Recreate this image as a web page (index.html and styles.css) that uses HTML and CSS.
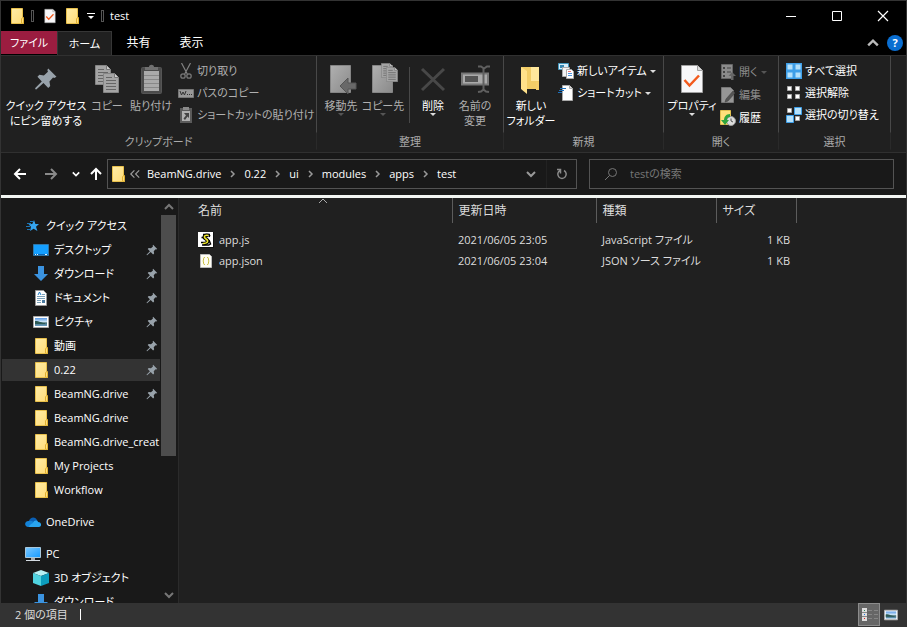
FILE: index.html
```html
<!DOCTYPE html>
<html lang="ja">
<head>
<meta charset="utf-8">
<title>test</title>
<link rel="stylesheet" href="styles.css">
</head>
<body>
<svg class="sprite" aria-hidden="true">
  <defs>
    <linearGradient id="g-folder" x1="0" y1="0" x2="1" y2="1"><stop offset="0" stop-color="#ffeca6"/><stop offset="1" stop-color="#ffdc78"/></linearGradient>
    <linearGradient id="g-gray" x1="0" y1="0" x2="1" y2="1"><stop offset="0" stop-color="#b0b0b0"/><stop offset="1" stop-color="#8a8a8a"/></linearGradient>
    <linearGradient id="g-screen" x1="0" y1="0" x2="1" y2="1"><stop offset="0" stop-color="#7cc8ff"/><stop offset="1" stop-color="#159aff"/></linearGradient>
    <linearGradient id="g-sky" x1="0" y1="0" x2="0" y2="1"><stop offset="0" stop-color="#5a9ae8"/><stop offset=".5" stop-color="#d8ecf8"/><stop offset=".6" stop-color="#406a70"/><stop offset="1" stop-color="#6aa0c8"/></linearGradient>
  </defs>
  <symbol id="folder" viewBox="0 0 16 16"><path d="M2.500 .5h11v10h1v5h-12z" fill="url(#g-folder)" stroke="#e8c04c"/><path d="M12.500 15V11l1-1.500h1v6z" fill="#ffdf80" stroke="#e0b030"/></symbol>
  <symbol id="doccheck" viewBox="0 0 24 32"><path d="M1.500 2.500h16l5 5v22h-21z" fill="#f7f7f9" stroke="#a0a0a0"/><path d="M17.500 2.500v5h5" fill="#ddd" stroke="#a0a0a0"/><path d="M4.500 17l5 5.500L19 12.500" fill="none" stroke="#f25a1d" stroke-width="2.500"/></symbol>
  <symbol id="pin" viewBox="0 0 16 16"><path d="M9.500 1l5.500 5.500-1.500.8-.8-.3-2.400 2.700.5 3-1.300 1.300L6.300 10.700 1.500 15l-.8-.3.3-.8 4.200-4.300L2.300 6.500 3.600 5.200l3 .4L9.300 3.200 8.900 2z" fill="#98a2aa"/></symbol>
  <symbol id="sheet" viewBox="0 0 16 20"><path d="M.5.500h11l4 4v15H.5z" fill="#a4a4a4" stroke="#858585"/><path d="M11.500.500v4h4" fill="#ccc" stroke="#777"/><path d="M3 4.500h6M3 7.500h10M3 10.500h10M3 13.500h10M3 16.500h10" stroke="#666"/></symbol>
  <symbol id="copy" viewBox="0 0 32 32"><use href="#sheet" x="4" y="2" width="16" height="20"/><use href="#sheet" x="12" y="10" width="16" height="20"/></symbol>
  <symbol id="paste" viewBox="0 0 32 32"><rect x="6.500" y="4.500" width="20" height="26" rx="1" fill="#4b4b4b" stroke="#555"/><path d="M9 8h15v20H9z" fill="#aaa"/><path d="M10 7V4h4c0-3 5-3 5 0h4v3z" fill="#707070"/><path d="M9 12.500h15M9 16.500h15M9 20.500h15M9 24.500h15" stroke="#888"/></symbol>
  <symbol id="cut" viewBox="0 0 16 16"><path d="M3.500 0l5.800 11M12.500 0L6.700 11" stroke="#828282" stroke-width="1.200"/><circle cx="5" cy="13" r="2.200" fill="none" stroke="#777" stroke-width="1.300"/><circle cx="11" cy="13" r="2.200" fill="none" stroke="#777" stroke-width="1.300"/></symbol>
  <symbol id="path" viewBox="0 0 16 16"><path d="M.5 4.500h15v8H.5z" fill="#999" stroke="#777"/><path d="M2 6l1.500 4L5 7l1.500 3L8 6" fill="none" stroke="#333"/><path d="M9 9.500h1M11 9.500h1M13 9.500h1" stroke="#333"/></symbol>
  <symbol id="pastelink" viewBox="0 0 16 16"><path d="M2 1h12v15H2z" fill="#5a5a5a"/><path d="M4 4h8v10H4z" fill="#b0b0b0"/><path d="M5 0h6v3H5z" fill="#8a8a8a"/><path d="M6 6h5v5L9.500 9.500 7 13 5.500 11.500l2.500-3z" fill="#444"/></symbol>
  <symbol id="move" viewBox="0 0 32 32"><path d="M5.500 2.500h20v27h-20z" fill="url(#g-gray)" stroke="#858585"/><path d="M15 23l8-8v5h8v6h-8v5z" fill="#686868" stroke="#555"/></symbol>
  <symbol id="copyto" viewBox="0 0 32 32"><path d="M5.500 2.500h20v27h-20z" fill="url(#g-gray)" stroke="#858585"/><use href="#sheet" x="14" y="0" width="12" height="15"/><use href="#sheet" x="19" y="4" width="12" height="15"/></symbol>
  <symbol id="delete" viewBox="0 0 32 32"><path d="M5 6l22 21M27 6L5 27" stroke="#484848" stroke-width="3"/></symbol>
  <symbol id="rename" viewBox="0 0 32 32"><path d="M3 10.500h26v11H3z" fill="#aaa" stroke="#777" stroke-width="2"/><path d="M6 13h13v6H6z" fill="#555"/><path d="M19 3.500h3l3 2 3-2h3M24.500 5v22M19 29l3-.5 2.500-2 2.500 2 3 .5" fill="none" stroke="#606060" stroke-width="2"/></symbol>
  <symbol id="newfolder" viewBox="0 0 32 32"><path d="M6 4h18v15h-1v7h-12z" fill="#f2cd67"/><path d="M16 4h8v14h-8z" fill="#ffe79c"/><path d="M6 4l6 4v23l-6-5z" fill="#ffe18a"/><path d="M21 19h3v8h-3z" fill="#f5cf6b"/></symbol>
  <symbol id="newitem" viewBox="0 0 16 16"><path d="M.5.500h10v6H.5z" fill="#d6edfa" stroke="#4397bd"/><path d="M2 2h4v3H2z" fill="#3786b0"/><path d="M4.500 4.500h7v9h-7z" fill="#f4f4f4" stroke="#aaa"/><path d="M8.500 6.500h5l2 2v7h-7z" fill="#fff" stroke="#aaa"/><path d="M10 10.500h4M10 12.500h4" stroke="#4e93df"/><path d="M10 8.500h3" stroke="#e77"/></symbol>
  <symbol id="shortcut" viewBox="0 0 16 16"><path d="M4.500.500h7l3 3v12h-10z" fill="#fff" stroke="#aaa"/><path d="M11.500.500v3h3" fill="#ddd" stroke="#aaa"/><path d="M2 3.500h6M1 5.500h5M0 7.500h4" stroke="#1e6fb8"/></symbol>
  <symbol id="open" viewBox="0 0 16 16"><path d="M1.500.500h11v14h-11z" fill="#8b8b8b" stroke="#666"/><path d="M3 3h2v2H3zM3 7h2v2H3zM3 11h2v2H3zM7 3.500h4v1H7zM7 7.500h4v1H7z" fill="#444"/><path d="M11 16v-4H8.500L12 8l4 4h-2.500v4z" fill="#666"/></symbol>
  <symbol id="edit" viewBox="0 0 16 16"><path d="M1.500.500h9l3 3v12h-12z" fill="#969696" stroke="#777"/><path d="M5 15l1-3 7-8 2 2-7 8z" fill="#555" stroke="#3c3c3c" stroke-width=".5"/></symbol>
  <symbol id="history" viewBox="0 0 16 16"><path d="M.5.500h10v14H.5z" fill="#ffe07a" stroke="#e0c050"/><circle cx="11" cy="11" r="4.500" fill="#ddd" stroke="#999"/><path d="M11 8.500V11l2 1" fill="none" stroke="#555"/><path d="M10 4C6 4 4 7 4 10H1l4 5 4-5H7c0-2 1-3 3-3z" fill="#2fa43c"/></symbol>
  <symbol id="selall" viewBox="0 0 16 16"><path d="M0 0h16v16H0z" fill="#3f9fe8"/><path d="M1.500 1.500h5v5h-5zM9.500 1.500h5v5h-5zM1.500 9.500h5v5h-5zM9.500 9.500h5v5h-5z" fill="#b5e1fb"/></symbol>
  <symbol id="selnone" viewBox="0 0 16 16"><path d="M1.500 1.500h4v4h-4zM9.500 1.500h4v4h-4zM1.500 9.500h4v4h-4zM9.500 9.500h4v4h-4z" fill="#fff" stroke="#a8a8a8"/></symbol>
  <symbol id="selinv" viewBox="0 0 16 16"><path d="M1.500 1.500h4v4h-4zM9.500 9.500h4v4h-4z" fill="#fff" stroke="#a8a8a8"/><path d="M8.500.500h7v7h-7zM.5 8.500h7v7h-7z" fill="#b5e1fb" stroke="#3f9fe8"/></symbol>
  <symbol id="star" viewBox="0 0 16 16"><path d="M9 2l1.400 4H14l-3 2.700 1.400 4.300L8.600 10.700 5 13l1-4.300L3.500 6.300l3.800-.3z" fill="#35a5f0"/><path d="M2 5.500h4M1 8.500h4M2 11.500h3M5 3.500h3" stroke="#1c75b5"/></symbol>
  <symbol id="desktop" viewBox="0 0 16 16"><path d="M.5 2.500h15v11H.5z" fill="#159fff" stroke="#3077a8"/><path d="M1 12.500h14" stroke="#0b66b5"/><path d="M2 12.500h1M4 12.500h1M12 12.500h2" stroke="#e8f6ff"/></symbol>
  <symbol id="download" viewBox="0 0 16 16"><path d="M5 0h6v8h4l-7 7-7-7h4z" fill="#3b93e0"/></symbol>
  <symbol id="document" viewBox="0 0 16 16"><path d="M2.500.500h8l3 3v12h-11z" fill="#fff" stroke="#999"/><path d="M4 6.500h8M4 12.500h4M4 10.500h4M4 8.500h8M9 4.500h3" stroke="#7aa0b8"/><path d="M5 5l1.500-3L8 5" fill="none" stroke="#2080c8"/><path d="M9 10h3v3H9z" fill="#4a7aa0"/></symbol>
  <symbol id="picture" viewBox="0 0 16 16"><path d="M.5 2.500h15v11H.5z" fill="#fff" stroke="#aaa"/><path d="M2 4h12v8H2z" fill="url(#g-sky)"/><path d="M2 7c5 0 6 2 10 2v1H2z" fill="#2c5a55"/></symbol>
  <symbol id="cloud" viewBox="0 0 16 16"><path d="M4 7c1-4 6-5 8-1l2 4-8 2z" fill="#0a5fb4"/><path d="M3.500 7c3-1 5 1 8 3v3h-8C-1 13-1 7 3.500 7z" fill="#1483d8"/><path d="M8 9c1-3 4-3 5-1 4 0 4 5 1 5H4c0-2 2-3 4-4z" fill="#29a5ef"/></symbol>
  <symbol id="pc" viewBox="0 0 16 16"><path d="M.5 1.500h15v10H.5z" fill="url(#g-screen)" stroke="#a8c8dc"/><path d="M6 12h4v2H6z" fill="#aaa"/><path d="M1 14.500h14" stroke="#d5dce2"/></symbol>
  <symbol id="cube" viewBox="0 0 16 16"><path d="M0 3l8-3 8 3-8 3z" fill="#b6f0f4"/><path d="M0 3l8 3v10l-8-3z" fill="#4fd2df"/><path d="M16 3L8 6v10l8-3z" fill="#0c9dbd"/></symbol>
  <symbol id="jsfile" viewBox="0 0 16 16"><path d="M0 0h16v16H0z" fill="#111"/><path d="M0 0h15v15H0z" fill="#fff"/><path d="M5 2.500h7M12 3l-1 2M4 13h7M3.500 5.500H6M11 8l1.500 4L11 13M3 10.500h2" stroke="#000" fill="none" stroke-width="1.500"/><path d="M10.500 3.500C5.500 2.500 5.500 5.500 8 7s2.500 4.500-3 4.500" fill="none" stroke="#000" stroke-width="3.600"/><path d="M10.500 3.500C5.500 2.500 5.500 5.500 8 7s2.500 4.500-3 4.500" fill="none" stroke="#f2ea28" stroke-width="1.500"/></symbol>
  <symbol id="jsonfile" viewBox="0 0 16 16"><path d="M2.500 1.500h9l2 2v11h-11z" fill="#fffef5" stroke="#bbb"/><path d="M7 4.500q-1.500 0-1.500 1v2l-.7.500.7.500v2q0 1 1.500 1M9 4.500q1.500 0 1.500 1v2l.7.500-.7.500v2q0 1-1.500 1" fill="none" stroke="#c9bf3e"/></symbol>
  <symbol id="chev-down" viewBox="0 0 10 10"><path d="M1 3l4 4 4-4" fill="none" stroke="currentColor" stroke-width="2"/></symbol>
  <symbol id="chev-up" viewBox="0 0 10 10"><path d="M1 7l4-4 4 4" fill="none" stroke="currentColor" stroke-width="2"/></symbol>
  <symbol id="chev-right" viewBox="0 0 10 10"><path d="M3 2l3 3-3 3" fill="none" stroke="currentColor" stroke-width="1.500"/></symbol>
</svg>

<div class="window">
  <header class="titlebar">
    <svg class="i16"><use href="#folder"/></svg>
    <span class="grip"></span>
    <button class="qat" aria-label="プロパティ"><svg class="i16"><use href="#doccheck"/></svg></button>
    <button class="qat" aria-label="新しいフォルダー"><svg class="i16"><use href="#folder"/></svg></button>
    <button class="qat-more" aria-label="カスタマイズ"><svg viewBox="0 0 8 8"><path d="M0 1.500h8" stroke="#fff"/><path d="M1 4h6L4 7z" fill="#fff"/></svg></button>
    <span class="grip"></span>
    <h1>test</h1>
    <div class="controls">
      <button aria-label="最小化"><svg viewBox="0 0 12 12"><path d="M1 6.500h10" stroke="#fff"/></svg></button>
      <button aria-label="最大化"><svg viewBox="0 0 12 12"><path d="M1.500 1.500h9v9h-9z" fill="none" stroke="#fff"/></svg></button>
      <button aria-label="閉じる"><svg viewBox="0 0 12 12"><path d="M1 1l10 10M11 1L1 11" stroke="#fff" stroke-width="1.200"/></svg></button>
    </div>
  </header>

  <nav class="tabs">
    <button class="tab file">ファイル</button>
    <button class="tab active">ホーム</button>
    <button class="tab">共有</button>
    <button class="tab">表示</button>
    <div class="tab-tools">
      <button aria-label="リボンの最小化"><svg class="i12"><use href="#chev-up"/></svg></button>
      <button class="help" aria-label="ヘルプ">?</button>
    </div>
  </nav>

  <section class="ribbon">
    <div class="group clipboard">
      <div class="tools">
        <button class="big w88"><svg class="i24"><use href="#pin"/></svg><span>クイック アクセス<br>にピン留めする</span></button>
        <button class="big w34 off"><svg class="i32"><use href="#copy"/></svg><span>コピー</span></button>
        <button class="big w54 off"><svg class="i32"><use href="#paste"/></svg><span>貼り付け</span></button>
        <div class="stack">
          <button class="small off"><svg class="i16"><use href="#cut"/></svg>切り取り</button>
          <button class="small off"><svg class="i16"><use href="#path"/></svg>パスのコピー</button>
          <button class="small off"><svg class="i16"><use href="#pastelink"/></svg>ショートカットの貼り付け</button>
        </div>
      </div>
      <div class="caption">クリップボード</div>
    </div>
    <div class="group organize">
      <div class="tools">
        <button class="big w42 off"><svg class="i32"><use href="#move"/></svg><span>移動先</span><i class="arrow dim"></i></button>
        <button class="big w42 off"><svg class="i32"><use href="#copyto"/></svg><span>コピー先</span><i class="arrow dim"></i></button>
        <span class="divider"></span>
        <button class="big w42"><svg class="i32"><use href="#delete"/></svg><span>削除</span><i class="arrow"></i></button>
        <button class="big w42 off"><svg class="i32"><use href="#rename"/></svg><span>名前の<br>変更</span></button>
      </div>
      <div class="caption">整理</div>
    </div>
    <div class="group create">
      <div class="tools">
        <button class="big w54"><svg class="i32"><use href="#newfolder"/></svg><span>新しい<br>フォルダー</span></button>
        <div class="stack">
          <button class="small"><svg class="i16"><use href="#newitem"/></svg>新しいアイテム<i class="arrow"></i></button>
          <button class="small"><svg class="i16"><use href="#shortcut"/></svg>ショートカット<i class="arrow"></i></button>
        </div>
      </div>
      <div class="caption">新規</div>
    </div>
    <div class="group opening">
      <div class="tools">
        <button class="big w56"><svg class="i32"><use href="#doccheck"/></svg><span>プロパティ</span><i class="arrow"></i></button>
        <div class="stack loose">
          <button class="small dimmed"><svg class="i16"><use href="#open"/></svg>開く<i class="arrow dim"></i></button>
          <button class="small dimmed"><svg class="i16"><use href="#edit"/></svg>編集</button>
          <button class="small"><svg class="i16"><use href="#history"/></svg>履歴</button>
        </div>
      </div>
      <div class="caption">開く</div>
    </div>
    <div class="group choose">
      <div class="tools">
        <div class="stack">
          <button class="small"><svg class="i16"><use href="#selall"/></svg>すべて選択</button>
          <button class="small"><svg class="i16"><use href="#selnone"/></svg>選択解除</button>
          <button class="small"><svg class="i16"><use href="#selinv"/></svg>選択の切り替え</button>
        </div>
      </div>
      <div class="caption">選択</div>
    </div>
  </section>

  <div class="address">
    <div class="history">
      <button aria-label="戻る"><svg class="i16" viewBox="0 0 16 16"><path d="M14 8H3M8 3L3 8l5 5" fill="none" stroke="#fff" stroke-width="2"/></svg></button>
      <button aria-label="進む"><svg class="i16" viewBox="0 0 16 16"><path d="M2 8h11M8 3l5 5-5 5" fill="none" stroke="#8a8a8a" stroke-width="2"/></svg></button>
      <button class="narrow" aria-label="最近表示した場所"><svg class="i8"><use href="#chev-down"/></svg></button>
      <button class="narrow" aria-label="上へ"><svg class="i16" viewBox="0 0 16 16"><path d="M8 14V3M3 8l5-5 5 5" fill="none" stroke="#fff" stroke-width="2"/></svg></button>
    </div>
    <div class="path">
      <svg class="i16"><use href="#folder"/></svg>
      <svg class="root" viewBox="0 0 10 10"><path d="M4.500 2L1.500 5l3 3M8.500 2l-3 3 3 3" fill="none" stroke="#999"/></svg>
      <a href="#">BeamNG.drive</a><svg class="sep"><use href="#chev-right"/></svg>
      <a href="#">0.22</a><svg class="sep"><use href="#chev-right"/></svg>
      <a href="#">ui</a><svg class="sep"><use href="#chev-right"/></svg>
      <a href="#">modules</a><svg class="sep"><use href="#chev-right"/></svg>
      <a href="#">apps</a><svg class="sep"><use href="#chev-right"/></svg>
      <a href="#">test</a>
      <button class="drop" aria-label="以前の場所"><svg class="i10"><use href="#chev-down"/></svg></button>
      <button class="refresh" aria-label="最新の情報に更新"><svg class="i12" viewBox="0 0 12 12"><path d="M4 2.500a4.200 4.200 0 1 0 4 0M4.500 5.500v-4H1" fill="none" stroke="#8a8a8a" stroke-width="1.500"/></svg></button>
    </div>
    <label class="search">
      <svg class="i14" viewBox="0 0 14 14"><circle cx="8.500" cy="5.500" r="4" fill="none" stroke="#777"/><path d="M5.500 8.500L1 13" stroke="#777"/></svg>
      <input type="text" placeholder="testの検索" aria-label="検索">
    </label>
  </div>

  <main class="content">
    <aside class="sidebar">
      <ul class="tree">
        <li><a class="top" href="#"><svg class="i16"><use href="#star"/></svg><span>クイック アクセス</span></a></li>
        <li><a href="#"><svg class="i16"><use href="#desktop"/></svg><span>デスクトップ</span><svg class="mark"><use href="#pin"/></svg></a></li>
        <li><a href="#"><svg class="i16"><use href="#download"/></svg><span>ダウンロード</span><svg class="mark"><use href="#pin"/></svg></a></li>
        <li><a href="#"><svg class="i16"><use href="#document"/></svg><span>ドキュメント</span><svg class="mark"><use href="#pin"/></svg></a></li>
        <li><a href="#"><svg class="i16"><use href="#picture"/></svg><span>ピクチャ</span><svg class="mark"><use href="#pin"/></svg></a></li>
        <li><a href="#"><svg class="i16"><use href="#folder"/></svg><span>動画</span><svg class="mark"><use href="#pin"/></svg></a></li>
        <li><a class="selected" href="#"><svg class="i16"><use href="#folder"/></svg><span>0.22</span><svg class="mark"><use href="#pin"/></svg></a></li>
        <li><a href="#"><svg class="i16"><use href="#folder"/></svg><span>BeamNG.drive</span><svg class="mark"><use href="#pin"/></svg></a></li>
        <li><a href="#"><svg class="i16"><use href="#folder"/></svg><span>BeamNG.drive</span></a></li>
        <li><a href="#"><svg class="i16"><use href="#folder"/></svg><span>BeamNG.drive_creat</span></a></li>
        <li><a href="#"><svg class="i16"><use href="#folder"/></svg><span>My Projects</span></a></li>
        <li><a href="#"><svg class="i16"><use href="#folder"/></svg><span>Workflow</span></a></li>
        <li class="section"><a class="top" href="#"><svg class="i16"><use href="#cloud"/></svg><span>OneDrive</span></a></li>
        <li class="section"><a class="top" href="#"><svg class="i16"><use href="#pc"/></svg><span>PC</span></a></li>
        <li><a href="#"><svg class="i16"><use href="#cube"/></svg><span>3D オブジェクト</span></a></li>
        <li><a href="#"><svg class="i16"><use href="#download"/></svg><span>ダウンロード</span></a></li>
      </ul>
      <div class="scrollbar">
        <button aria-label="上にスクロール"><svg class="i10"><use href="#chev-up"/></svg></button>
        <div class="track"><div class="thumb"></div></div>
        <button aria-label="下にスクロール"><svg class="i10"><use href="#chev-down"/></svg></button>
      </div>
    </aside>
    <section class="files">
      <table>
        <colgroup><col class="c-name"><col class="c-date"><col class="c-type"><col class="c-size"><col></colgroup>
        <thead>
          <tr><th>名前<svg class="sort" viewBox="0 0 10 6"><path d="M1 5l4-4 4 4" fill="none" stroke="#aaa"/></svg></th><th>更新日時</th><th>種類</th><th>サイズ</th><td></td></tr>
        </thead>
        <tbody>
          <tr><td><span class="file-name"><svg class="i16"><use href="#jsfile"/></svg>app.js</span></td><td>2021/06/05 23:05</td><td>JavaScript ファイル</td><td class="num">1 KB</td><td></td></tr>
          <tr><td><span class="file-name"><svg class="i16"><use href="#jsonfile"/></svg>app.json</span></td><td>2021/06/05 23:04</td><td>JSON ソース ファイル</td><td class="num">1 KB</td><td></td></tr>
        </tbody>
      </table>
    </section>
  </main>

  <footer class="status">
    <span class="count">2 個の項目</span><span class="bar"></span>
    <div class="views">
      <button class="on" aria-label="詳細"><svg viewBox="0 0 20 20"><path d="M3 3h5v13H3z" fill="#ddd"/><path d="M3 7.500h5M3 11.500h5" stroke="#888"/><path d="M5 5h1v1H5z" fill="#2a8a58"/><path d="M5 9h1v1H5z" fill="#1b78e8"/><path d="M5 13h1v1H5z" fill="#e01818"/><path d="M9 5.500h4M15 5.500h4M9 9.500h4M15 9.500h4M9 13.500h4M15 13.500h4" stroke="#858585"/></svg></button>
      <button aria-label="大アイコン"><svg class="i14"><use href="#picture"/></svg></button>
    </div>
  </footer>
</div>
</body>
</html>
```
FILE: styles.css
```css
* { box-sizing: border-box; }

body {
  margin: 0;
  background: #000;
  color: #fff;
  font: 11px/16px "Open Sans", "Noto Sans CJK JP", sans-serif;
  font-feature-settings: "palt";
}

button {
  margin: 0;
  padding: 0;
  border: 0;
  background: none;
  color: inherit;
  font: inherit;
  font-feature-settings: inherit;
}

a { color: inherit; text-decoration: none; }
svg { display: block; flex: none; }

.sprite { position: absolute; width: 0; height: 0; }
.i8 { width: 8px; height: 8px; }
.i10 { width: 10px; height: 10px; }
.i12 { width: 12px; height: 12px; }
.i14 { width: 14px; height: 14px; }
.i16 { width: 16px; height: 16px; }
.i24 { width: 24px; height: 24px; }
.i32 { width: 32px; height: 32px; }

.window {
  display: flex;
  flex-direction: column;
  height: 100vh;
  border: 1px solid #333;
}

/* Title bar */
.titlebar {
  display: flex;
  align-items: center;
  height: 30px;
  padding-left: 8px;
  flex: none;
}
.grip { flex: none; width: 3px; height: 12px; margin: 0 6px; border: 1px solid #555; }
.qat { width: 22px; padding-left: 2px; }
.qat-more { width: 11px; padding-left: 3px; }
.qat-more svg { width: 8px; height: 8px; }
.titlebar h1 { margin: 0; font-size: 11px; font-weight: 400; }
.controls { display: flex; align-self: stretch; margin-left: auto; }
.controls button { display: grid; place-items: center; width: 46px; }
.controls svg { width: 12px; height: 12px; }

/* Tabs */
.tabs { display: flex; height: 24px; flex: none; }
.tab { width: 53px; font-size: 12px; }
.tab.file, .tab.active { font-size: 11px; }
.tab.file { width: 56px; background: #9b1d40; margin-bottom: 1px; }
.tab.active { width: 55px; border: 1px solid #363636; border-bottom: 0; background: #202020; }
.tab-tools { display: flex; align-items: center; gap: 8px; margin-left: auto; padding-right: 3px; color: #bbb; }
.help { width: 16px; height: 16px; border-radius: 50%; background: #0a6ed1; color: #fff; font-weight: 700; }

/* Ribbon */
.ribbon {
  display: flex;
  flex: none;
  height: 98px;
  background: #202020;
  border-top: 1px solid #303030;
  border-bottom: 1px solid #303030;
}
.group {
  display: flex;
  flex-direction: column;
  flex: none;
  padding-top: 3px;
  border-right: 1px solid;
  border-image: linear-gradient(#484848 78%, #2a2a2a 80%, #2a2a2a 96%, #202020 97%) 1;
}
.clipboard { width: 316px; }
.organize { width: 187px; }
.create { width: 160px; }
.opening { width: 115px; }
.choose { width: 112px; }
.tools { display: flex; height: 75px; }
.clipboard .tools { padding-left: 1px; }
.organize .tools { padding-left: 3px; }
.choose .tools { padding-left: 7px; }
.caption { text-align: center; color: #aaa; line-height: 15px; }
.big {
  display: flex;
  flex-direction: column;
  align-items: center;
  padding-top: 4px;
  line-height: 15px;
  white-space: nowrap;
}
.big span { margin-top: 3px; }
.big .i24 { margin: 4px; }
.w34 { width: 34px; }
.w42 { width: 42px; }
.w54 { width: 54px; }
.w56 { width: 56px; }
.w88 { width: 88px; }
.off { color: #b0b0b0; }
.dimmed { color: #8c8c8c; }
.stack { display: flex; flex-direction: column; padding-top: 1px; }
.loose { gap: 1px; padding-top: 2px; }
.small { display: flex; align-items: center; gap: 3px; height: 22px; white-space: nowrap; }
.arrow { border: 3px solid transparent; border-top-color: #ddd; border-bottom: 0; }
.arrow.dim { border-top-color: #555; }
.divider { width: 1px; height: 56px; margin: 8px 2px 0 5px; background: #484848; }

/* Address row */
.address {
  display: flex;
  align-items: center;
  flex: none;
  height: 45px;
  padding: 0 12px 0 3px;
  border-bottom: 3px solid #f2f5f2;
  background: #191919;
}
.history { display: flex; width: 103px; }
.history button { display: grid; place-items: center; width: 31px; }
.history .narrow { width: 20px; }
.path, .search { display: flex; align-items: center; height: 30px; border: 1px solid #535353; }
.path { flex: 1; padding-left: 2px; white-space: nowrap; }
.root { width: 12px; height: 12px; margin: 0 6px 0 3px; }
.sep { width: 10px; height: 10px; margin: 0 6px 0 7px; color: #999; }
.drop { margin-left: auto; width: 30px; display: grid; place-items: center; color: #999; }
.refresh { width: 30px; height: 28px; border-left: 1px solid #222; display: grid; place-items: center; }
.search { width: 305px; margin-left: 12px; padding-left: 14px; gap: 12px; }
.search input {
  flex: 1;
  min-width: 0;
  padding: 0;
  border: 0;
  outline: 0;
  background: none;
  color: #fff;
  font: inherit;
  font-feature-settings: inherit;
}
.search input::placeholder { color: #777; opacity: 1; }

/* Content */
.content { display: flex; flex: 1; min-height: 0; background: #202020; }
.sidebar { display: flex; width: 178px; flex: none; border-right: 1px solid #2b2b2b; background: #191919; }
.tree { flex: 1; min-width: 0; margin: 0; padding: 17px 1px 0; list-style: none; overflow: hidden; }
.tree a {
  display: flex;
  align-items: center;
  gap: 5px;
  height: 22px;
  margin-bottom: 2px;
  padding-left: 31px;
}
.tree a.top { padding-left: 23px; }
.tree a.selected { background: #333; }
.tree span { flex: 1; white-space: nowrap; }
.tree .section { margin-top: 10px; }
.mark { width: 12px; height: 12px; margin-right: 2px; }
.scrollbar { display: flex; flex-direction: column; width: 15px; margin-right: 2px; color: #777; }
.scrollbar button { display: grid; place-items: center; height: 17px; }
.track { flex: 1; }
.thumb { height: 65%; background: #4d4d4d; }

.files { flex: 1; min-width: 0; color: #ddd; }
table { width: 100%; table-layout: fixed; border-collapse: collapse; }
.c-name { width: 273px; }
.c-date { width: 144px; }
.c-type { width: 120px; }
.c-size { width: 80px; }
th { position: relative; height: 25px; padding: 0 6px; border-right: 1px solid #5c5c5c; text-align: left; font-size: 12px; font-weight: 400; }
td { height: 21px; padding: 0 6px; }
th:first-child, td:first-child { padding-left: 19px; }
tbody::before { content: ""; display: block; height: 6px; }
.sort { position: absolute; top: 0; left: 139px; width: 10px; height: 6px; }
.file-name { display: flex; align-items: center; gap: 5px; }
.num { text-align: right; }

/* Status bar */
.status { display: flex; align-items: center; flex: none; height: 23px; padding: 0 8px 0 14px; background: #333; color: #ddd; }
.bar { width: 1px; height: 11px; margin-left: 12px; background: #fff; }
.views { display: flex; align-items: center; align-self: stretch; gap: 4px; margin-left: auto; }
.views button { display: grid; place-items: center; height: 23px; }
.views .on { width: 22px; border: 1px solid #8c8c8c; background: #666; }
.on svg { width: 20px; height: 20px; }
```
